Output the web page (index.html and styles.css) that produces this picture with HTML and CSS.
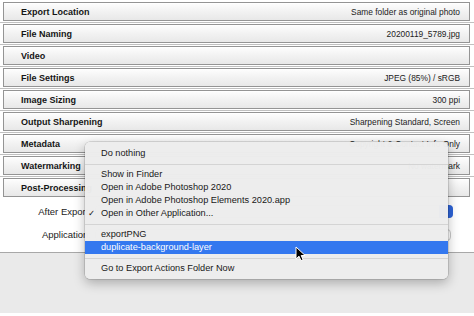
FILE: index.html
```html
<!DOCTYPE html>
<html lang="en">
<head>
  <meta charset="UTF-8">
  <title>Export</title>
  <link rel="stylesheet" href="styles.css">
</head>
<body>
  <div class="panel">
    <div class="section"><div class="head"><span class="title">Export Location</span><span class="value">Same folder as original photo</span></div></div>
    <div class="section"><div class="head"><span class="title">File Naming</span><span class="value">20200119_5789.jpg</span></div></div>
    <div class="section"><div class="head"><span class="title">Video</span><span class="value"></span></div></div>
    <div class="section"><div class="head"><span class="title">File Settings</span><span class="value">JPEG (85%) / sRGB</span></div></div>
    <div class="section"><div class="head"><span class="title">Image Sizing</span><span class="value">300 ppi</span></div></div>
    <div class="section"><div class="head"><span class="title">Output Sharpening</span><span class="value">Sharpening Standard, Screen</span></div></div>
    <div class="section"><div class="head"><span class="title">Metadata</span><span class="value">Copyright &amp; Contact Info Only</span></div></div>
    <div class="section"><div class="head"><span class="title">Watermarking</span><span class="value">No watermark</span></div></div>
    <div class="section last"><div class="head"><span class="title">Post-Processing</span><span class="value"></span></div></div>

    <div class="post-body">
      <div class="field">
        <label>After Export:</label>
        <div class="popup blue"><span class="arrows"></span></div>
      </div>
      <div class="field">
        <label>Application:</label>
        <div class="popup gray"></div>
      </div>
    </div>
  </div>
  <div class="footer"></div>

  <div class="menu">
    <div class="item">Do nothing</div>
    <div class="sep"></div>
    <div class="item">Show in Finder</div>
    <div class="item">Open in Adobe Photoshop 2020</div>
    <div class="item">Open in Adobe Photoshop Elements 2020.app</div>
    <div class="item checked"><span class="check">✓</span>Open in Other Application...</div>
    <div class="sep"></div>
    <div class="item">exportPNG</div>
    <div class="item selected">duplicate-background-layer</div>
    <div class="sep"></div>
    <div class="item">Go to Export Actions Folder Now</div>
  </div>

  <svg class="cursor" width="12" height="16" viewBox="0 0 12 16">
    <path d="M1 1 L1 13 L4 10.2 L6 14.6 L8.1 13.7 L6.2 9.5 L10.2 9.5 Z" fill="#000" stroke="#fff" stroke-width="1"/>
  </svg>
</body>
</html>
```

FILE: styles.css
```css
body {
  margin: 0;
  padding-top: 1px;
  height: 315px;
  overflow: hidden;
  background: #fff;
  font-family: 'Liberation Sans', Arial, sans-serif;
  position: relative;
}
.section {
  padding: 1px 4px 1px 3px;
  border-bottom: 1px solid #c0c0c0;
}
.section.last {
  border-bottom: none;
}
.head {
  height: 17px;
  border: 1px solid #949494;
  background: linear-gradient(#fefefe, #f3f3f3 45%, #e8e8e8);
  box-shadow: inset 0 1px 0 #fff;
  display: flex;
  justify-content: space-between;
  align-items: center;
  padding: 0 9px 0 17px;
}
.title {
  font-weight: bold;
  font-size: 9px;
  color: #151515;
}
.value {
  font-size: 8.4px;
  color: #222;
}
.post-body {
  padding: 7px 0 11px;
  display: flex;
  flex-direction: column;
  gap: 10px;
}
.field {
  display: flex;
  align-items: center;
  gap: 4px;
  height: 13px;
}
.field label {
  width: 91px;
  text-align: right;
  font-size: 9.5px;
  color: #222;
}
.popup {
  flex: 1;
  height: 13px;
  border-radius: 4px;
  box-sizing: border-box;
  background: #fff;
  border: 1px solid #c9c9c9;
  position: relative;
}
.popup.blue {
  margin-right: 21px;
}
.popup.blue .arrows {
  position: absolute;
  right: -1px;
  top: -1px;
  width: 14px;
  height: 13px;
  border-radius: 0 4px 4px 0;
  background: #2d63d8;
}
.popup.gray {
  margin-right: 23px;
  height: 12px;
}
.footer {
  height: 60px;
  border-top: 1px solid #a8a8a8;
  background: #eaeaea;
}
.menu {
  position: absolute;
  left: 85px;
  top: 142px;
  width: 363px;
  padding: 5px 0 4px;
  border-radius: 5px;
  background: rgba(237, 237, 237, 0.98);
  box-shadow: 0 0 0 0.5px rgba(0, 0, 0, 0.22), 0 4px 12px rgba(0, 0, 0, 0.28);
}
.item {
  height: 13px;
  line-height: 13px;
  padding-left: 16px;
  font-size: 9.2px;
  color: #181818;
  position: relative;
  white-space: nowrap;
}
.item.selected {
  background: #3478ef;
  color: #fff;
}
.check {
  position: absolute;
  left: 3px;
  top: 0;
  font-family: 'DejaVu Sans', sans-serif;
  font-size: 8.5px;
}
.sep {
  height: 1px;
  background: #d4d4d4;
  margin: 4px 0 3px;
}
.sep:last-of-type {
  margin-bottom: 4px;
}
.cursor {
  position: absolute;
  left: 295px;
  top: 246px;
}
```
